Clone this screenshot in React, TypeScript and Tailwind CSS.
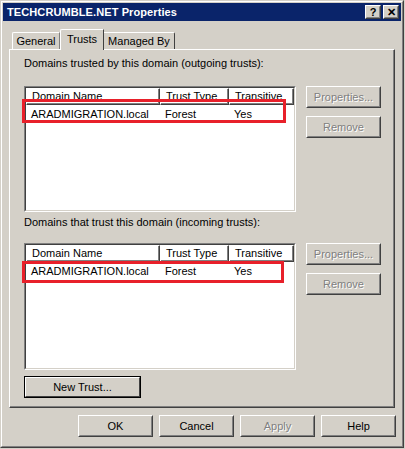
const face = '#d4d0c8';

function Raised({
  className = '',
  strong = false,
  children,
}: {
  className?: string;
  strong?: boolean;
  children?: React.ReactNode;
}) {
  // classic 3D button border: white/light outer-top-left, dark bottom-right
  return (
    <div
      className={`${
        strong ? 'border border-black' : 'border border-t-white border-l-white border-r-[#404040] border-b-[#404040]'
      } ${className}`}
    >
      <div
        className={`flex h-full w-full items-center justify-center border ${
          strong
            ? 'border-t-white border-l-white border-r-[#404040] border-b-[#404040]'
            : 'border-t-[#d4d0c8] border-l-[#d4d0c8] border-r-[#808080] border-b-[#808080]'
        }`}
      >
        {children}
      </div>
    </div>
  );
}

function Btn({
  label,
  width,
  disabled = false,
  strong = false,
}: {
  label: string;
  width: string;
  disabled?: boolean;
  strong?: boolean;
}) {
  return (
    <Raised strong={strong} className={`${width} h-[22px]`}>
      <span
        className={
          disabled
            ? 'text-[#808080] [text-shadow:1px_1px_0_#ffffff]'
            : 'text-black'
        }
      >
        {label}
      </span>
    </Raised>
  );
}

function HeaderCell({ label, width }: { label: string; width: string }) {
  return (
    <div
      className={`${width} h-[17px] border border-t-white border-l-white border-r-[#404040] border-b-[#404040]`}
    >
      <div className="flex h-full items-center border-r border-b border-r-[#808080] border-b-[#808080] pl-[5px]">
        {label}
      </div>
    </div>
  );
}

function TrustList({
  height,
  box,
}: {
  height: string;
  box: { top: string; width: string; height: string };
}) {
  return (
    <div className="relative">
      <div
        className={`w-[272px] ${height} border border-t-[#808080] border-l-[#808080] border-r-white border-b-white`}
      >
        <div className="h-full border border-t-[#404040] border-l-[#404040] border-r-[#d4d0c8] border-b-[#d4d0c8] bg-white">
          <div className="flex">
            <HeaderCell label="Domain Name" width="w-[134px]" />
            <HeaderCell label="Trust Type" width="w-[69px]" />
            <HeaderCell label="Transitive" width="w-[65px]" />
          </div>
          <div className="flex h-[19px] items-center">
            <span className="w-[134px] pl-[5px]">ARADMIGRATION.local</span>
            <span className="w-[69px] pl-[5px]">Forest</span>
            <span className="pl-[5px]">Yes</span>
          </div>
        </div>
      </div>
      {/* red annotation box drawn over the screenshot */}
      <div
        className={`absolute left-[-2px] ${box.top} ${box.width} ${box.height} border-[3px] border-[#e8202a]`}
      />
    </div>
  );
}

function TitleButton({ children }: { children: React.ReactNode }) {
  return (
    <Raised className="h-[14px] w-[16px] bg-[#d4d0c8]">
      <span className="text-[11px] leading-none font-bold text-black">{children}</span>
    </Raised>
  );
}

export default function App() {
  return (
    <div
      className="h-[449px] w-[405px] overflow-hidden bg-[#d4d0c8] font-['Liberation_Sans',Arial,sans-serif] text-[11px] leading-[13px] text-black"
      style={{ backgroundColor: face }}
    >
      <div className="h-[448px] w-[404px] border border-t-[#d4d0c8] border-l-[#d4d0c8] border-r-[#404040] border-b-[#404040]">
        <div className="flex h-full flex-col border border-t-white border-l-white border-r-[#808080] border-b-[#808080] p-[1px]">
          {/* title bar */}
          <div className="flex h-[18px] items-center justify-between bg-[#0a246a] pr-[2px] pl-[4px]">
            <span className="text-[11px] font-bold tracking-[0.1px] text-white">TECHCRUMBLE.NET Properties</span>
            <div className="flex gap-[2px]">
              <TitleButton>?</TitleButton>
              <TitleButton>✕</TitleButton>
            </div>
          </div>

          {/* tabs */}
          <div className="mt-[8px] ml-[9px] flex items-end">
            <div className="flex h-[17px] w-[48px] items-center justify-center rounded-tl-[2px] border-t border-l border-t-white border-l-white border-r border-r-[#808080]">
              General
            </div>
            <div className="relative z-10 -mb-[1px] flex h-[21px] w-[44px] items-start justify-center rounded-tl-[2px] border-t border-l border-t-white border-l-white border-r border-r-[#404040] bg-[#d4d0c8] pt-[3px]">
              Trusts
            </div>
            <div className="flex h-[17px] w-[71px] items-center justify-center rounded-tr-[2px] border-t border-t-white border-r border-r-[#404040]">
              Managed By
            </div>
          </div>

          {/* tab page */}
          <div className="ml-[6px] h-[359px] w-[386px] border border-t-white border-l-white border-r-[#404040] border-b-[#404040]">
            <div className="flex h-full flex-col border-r border-b border-r-[#808080] border-b-[#808080] pl-[14px]">
              <div className="mt-[7px]">Domains trusted by this domain (outgoing trusts):</div>
              <div className="mt-[16px] flex gap-[10px]">
                <TrustList
                  height="h-[126px]"
                  box={{ top: 'top-[13px]', width: 'w-[264px]', height: 'h-[24px]' }}
                />
                <div className="flex flex-col gap-[8px]">
                  <Btn label="Properties..." width="w-[75px]" disabled />
                  <Btn label="Remove" width="w-[75px]" disabled />
                </div>
              </div>
              <div className="mt-[4px]">Domains that trust this domain (incoming trusts):</div>
              <div className="mt-[14px] flex gap-[10px]">
                <TrustList
                  height="h-[127px]"
                  box={{ top: 'top-[18px]', width: 'w-[262px]', height: 'h-[22px]' }}
                />
                <div className="flex flex-col gap-[8px]">
                  <Btn label="Properties..." width="w-[75px]" disabled />
                  <Btn label="Remove" width="w-[75px]" disabled />
                </div>
              </div>
              <div className="mt-[6px]">
                <Btn label="New Trust..." width="w-[117px]" strong />
              </div>
            </div>
          </div>

          {/* dialog buttons */}
          <div className="mt-[7px] mr-[5px] flex justify-end gap-[6px]">
            <Btn label="OK" width="w-[75px]" />
            <Btn label="Cancel" width="w-[75px]" />
            <Btn label="Apply" width="w-[75px]" disabled />
            <Btn label="Help" width="w-[75px]" />
          </div>
        </div>
      </div>
    </div>
  );
}
